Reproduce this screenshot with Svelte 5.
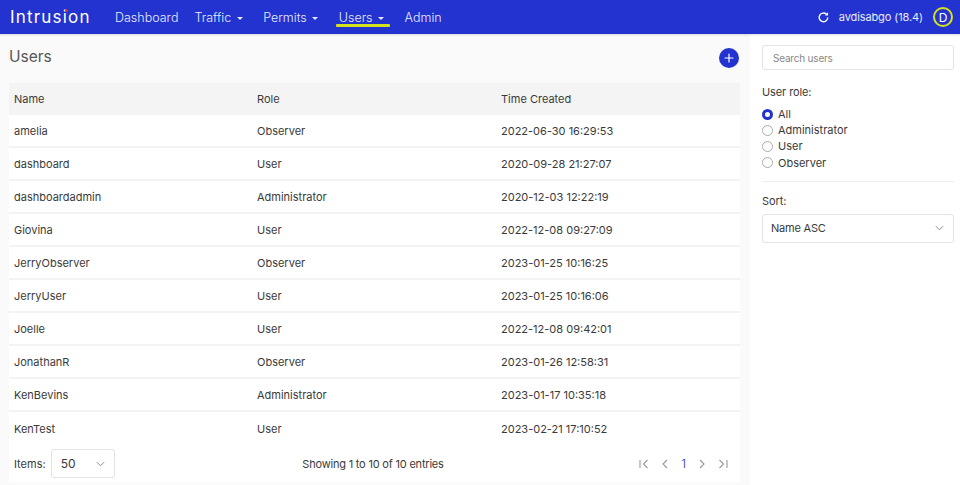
<script>
    const users = [
        { name: "amelia", role: "Observer", created: "2022-06-30 16:29:53" },
        { name: "dashboard", role: "User", created: "2020-09-28 21:27:07" },
        { name: "dashboardadmin", role: "Administrator", created: "2020-12-03 12:22:19" },
        { name: "Giovina", role: "User", created: "2022-12-08 09:27:09" },
        { name: "JerryObserver", role: "Observer", created: "2023-01-25 10:16:25" },
        { name: "JerryUser", role: "User", created: "2023-01-25 10:16:06" },
        { name: "Joelle", role: "User", created: "2022-12-08 09:42:01" },
        { name: "JonathanR", role: "Observer", created: "2023-01-26 12:58:31" },
        { name: "KenBevins", role: "Administrator", created: "2023-01-17 10:35:18" },
        { name: "KenTest", role: "User", created: "2023-02-21 17:10:52" }
    ];

    const navItems = [
        { label: "Dashboard" },
        { label: "Traffic", caret: true },
        { label: "Permits", caret: true },
        { label: "Users", caret: true, active: true },
        { label: "Admin" }
    ];

    const roles = ["All", "Administrator", "User", "Observer"];
    let role = "All";
</script>

<div class="page">
    <header class="topbar">
        <div class="logo">Intrusion<span class="logo-dot"></span></div>
        <nav class="nav">
            {#each navItems as item}
                <div class="nav-item" class:active={item.active} class:has-caret={item.caret}>
                    {item.label}
                    {#if item.caret}<span class="caret"></span>{/if}
                </div>
            {/each}
        </nav>
        <div class="account">
            <svg class="refresh" viewBox="0 0 16 16" width="13" height="13" fill="none" stroke="#fff" stroke-width="1.7">
                <path d="M13.2 8.6A5.3 5.3 0 1 1 11.6 4" stroke-linecap="round" />
                <path d="M13.6 1.4v4h-4z" fill="#fff" stroke="none" />
            </svg>
            <span class="username">avdisabgo (18.4)</span>
            <div class="avatar">D</div>
        </div>
    </header>

    <div class="body">
        <main class="content">
            <div class="title-row">
                <h1>Users</h1>
                <button class="add" type="button" aria-label="Add user">
                    <svg viewBox="0 0 10 10" width="10" height="10" stroke="#fff" stroke-width="1.2" stroke-linecap="round">
                        <path d="M5 1v8M1 5h8" />
                    </svg>
                </button>
            </div>

            <div class="table">
                <div class="row head">
                    <div>Name</div>
                    <div>Role</div>
                    <div>Time Created</div>
                </div>
                {#each users as user}
                    <div class="row">
                        <div>{user.name}</div>
                        <div>{user.role}</div>
                        <div>{user.created}</div>
                    </div>
                {/each}
                <div class="table-footer">
                    <div class="items">
                        <span>Items:</span>
                        <div class="select small">
                            50
                            <svg class="chev" viewBox="0 0 10 6" width="9" height="6" fill="none" stroke="#888" stroke-width="1.1"><path d="M1 1l4 4 4-4" /></svg>
                        </div>
                    </div>
                    <div class="showing">Showing 1 to 10 of 10 entries</div>
                    <div class="pager">
                        <svg viewBox="0 0 10 10" width="10" height="10" fill="none" stroke="#999" stroke-width="1.1"><path d="M1 1v8M8.5 1L4.5 5l4 4" /></svg>
                        <svg viewBox="0 0 10 10" width="10" height="10" fill="none" stroke="#999" stroke-width="1.1"><path d="M7 1L3 5l4 4" /></svg>
                        <span class="page-num">1</span>
                        <svg viewBox="0 0 10 10" width="10" height="10" fill="none" stroke="#999" stroke-width="1.1"><path d="M3 1l4 4-4 4" /></svg>
                        <svg viewBox="0 0 10 10" width="10" height="10" fill="none" stroke="#999" stroke-width="1.1"><path d="M1.5 1l4 4-4 4M9 1v8" /></svg>
                    </div>
                </div>
            </div>
        </main>

        <aside class="sidebar">
            <div class="search">Search users</div>
            <div class="label role-label">User role:</div>
            <div class="radios">
                {#each roles as r}
                    <div class="radio-row">
                        <span class="radio" class:checked={r === role}></span>
                        {r}
                    </div>
                {/each}
            </div>
            <hr />
            <div class="label">Sort:</div>
            <div class="select sort">
                Name ASC
                <svg class="chev" viewBox="0 0 10 6" width="9" height="6" fill="none" stroke="#888" stroke-width="1.1"><path d="M1 1l4 4 4-4" /></svg>
            </div>
        </aside>
    </div>
</div>

<style>
    :global(body) {
        margin: 0;
        background: #fff;
    }

    .page {
        width: 960px;
        height: 485px;
        overflow: hidden;
        display: flex;
        flex-direction: column;
        font-family: Inter, "Noto Sans", sans-serif;
        font-size: 11px;
        color: #3a3a3a;
    }

    .topbar {
        height: 34px;
        flex: none;
        display: flex;
        align-items: center;
        background: #2233cf;
        color: #e8ebff;
        box-shadow: 0 1px 2px rgba(0, 0, 0, 0.15);
        position: relative;
    }

    .logo {
        position: relative;
        width: 105px;
        padding-left: 10px;
        font-size: 17px;
        letter-spacing: 1.2px;
        color: #fff;
    }

    .logo-dot {
        position: absolute;
        left: 65px;
        top: 2px;
        width: 3px;
        height: 3px;
        border-radius: 50%;
        background: #d33;
    }

    .nav {
        display: flex;
        align-items: center;
    }

    .nav-item {
        position: relative;
        font-size: 12.5px;
        font-weight: 300;
        margin-right: 16px;
        white-space: nowrap;
    }

    .nav-item.has-caret {
        margin-right: 20.5px;
    }

    .nav-item.active::after {
        content: "";
        position: absolute;
        left: -3px;
        right: -6px;
        bottom: -2px;
        height: 3px;
        background: #d4e41c;
        border-radius: 1px;
    }

    .caret {
        display: inline-block;
        margin-left: 2px;
        vertical-align: 2px;
        border-left: 3px solid transparent;
        border-right: 3px solid transparent;
        border-top: 3px solid #e8ebff;
    }

    .account {
        margin-left: auto;
        display: flex;
        align-items: center;
        padding-right: 7px;
    }

    .refresh {
        margin-right: 9px;
    }

    .username {
        font-size: 11px;
        letter-spacing: -0.1px;
        margin-right: 10px;
    }

    .avatar {
        width: 16px;
        height: 16px;
        border: 2px solid #d4e41c;
        border-radius: 50%;
        display: flex;
        align-items: center;
        justify-content: center;
        font-size: 12px;
        color: #fff;
    }

    .body {
        flex: 1;
        display: flex;
        min-height: 0;
    }

    .content {
        width: 750px;
        flex: none;
        box-sizing: border-box;
        padding: 0 10px 0 9px;
        background: #fafafa;
    }

    .title-row {
        height: 48px;
        margin-bottom: 1px;
        display: flex;
        align-items: center;
        justify-content: space-between;
    }

    h1 {
        margin: 0 0 4px;
        font-size: 15.5px;
        font-weight: 400;
        color: #555;
    }

    .add {
        width: 20px;
        height: 20px;
        padding: 0;
        border: 0;
        border-radius: 50%;
        background: #2233cf;
        display: flex;
        align-items: center;
        justify-content: center;
        margin-right: 1px;
    }

    .table {
        background: #fff;
    }

    .row {
        height: 33px;
        box-sizing: border-box;
        display: grid;
        grid-template-columns: 243px 244px 1fr;
        align-items: center;
        padding-left: 5px;
        border-bottom: 2px solid #f3f3f3;
    }

    .row.head {
        height: 32px;
        background: #f4f4f4;
        border-bottom: 0;
    }

    .row:nth-last-child(2) {
        border-bottom: 0;
    }

    .table-footer {
        height: 37px;
        display: grid;
        grid-template-columns: 1fr 1fr 1fr;
        align-items: center;
        padding: 0 12px 0 5px;
    }

    .items {
        display: flex;
        align-items: center;
        gap: 5px;
    }

    .select {
        display: flex;
        align-items: center;
        justify-content: space-between;
        box-sizing: border-box;
        background: #fff;
        border: 1px solid #e3e3e3;
        border-radius: 3px;
    }

    .select.small {
        width: 64px;
        height: 29px;
        padding: 0 9px;
        font-size: 12px;
    }

    .showing {
        text-align: center;
        letter-spacing: -0.2px;
        padding-left: 4px;
    }

    .pager {
        display: flex;
        align-items: center;
        justify-content: flex-end;
        gap: 11px;
    }

    .page-num {
        color: #2233cf;
        font-size: 12px;
        font-weight: 300;
    }

    .sidebar {
        flex: 1;
        box-sizing: border-box;
        padding: 11px 6px 0 12px;
        background: #fff;
    }

    .search {
        height: 25px;
        box-sizing: border-box;
        display: flex;
        align-items: center;
        padding-left: 10px;
        border: 1px solid #e3e3e3;
        border-radius: 3px;
        font-size: 10px;
        letter-spacing: -0.2px;
        color: #888;
    }

    .label {
        font-size: 11px;
        letter-spacing: -0.1px;
    }

    .role-label {
        margin-top: 15px;
    }

    .radios {
        margin-top: 7px;
    }

    .radio-row {
        display: flex;
        align-items: center;
        gap: 5px;
        height: 16.2px;
    }

    .radio {
        width: 11px;
        height: 11px;
        box-sizing: border-box;
        border: 1px solid #aaa;
        border-radius: 50%;
        background: #fff;
    }

    .radio.checked {
        border: 3px solid #2233cf;
    }

    hr {
        margin: 10px 0 12px;
        border: 0;
        border-top: 1px solid #eee;
    }

    .select.sort {
        margin-top: 6px;
        height: 29px;
        padding: 0 9px 0 8px;
        letter-spacing: -0.2px;
    }
</style>
